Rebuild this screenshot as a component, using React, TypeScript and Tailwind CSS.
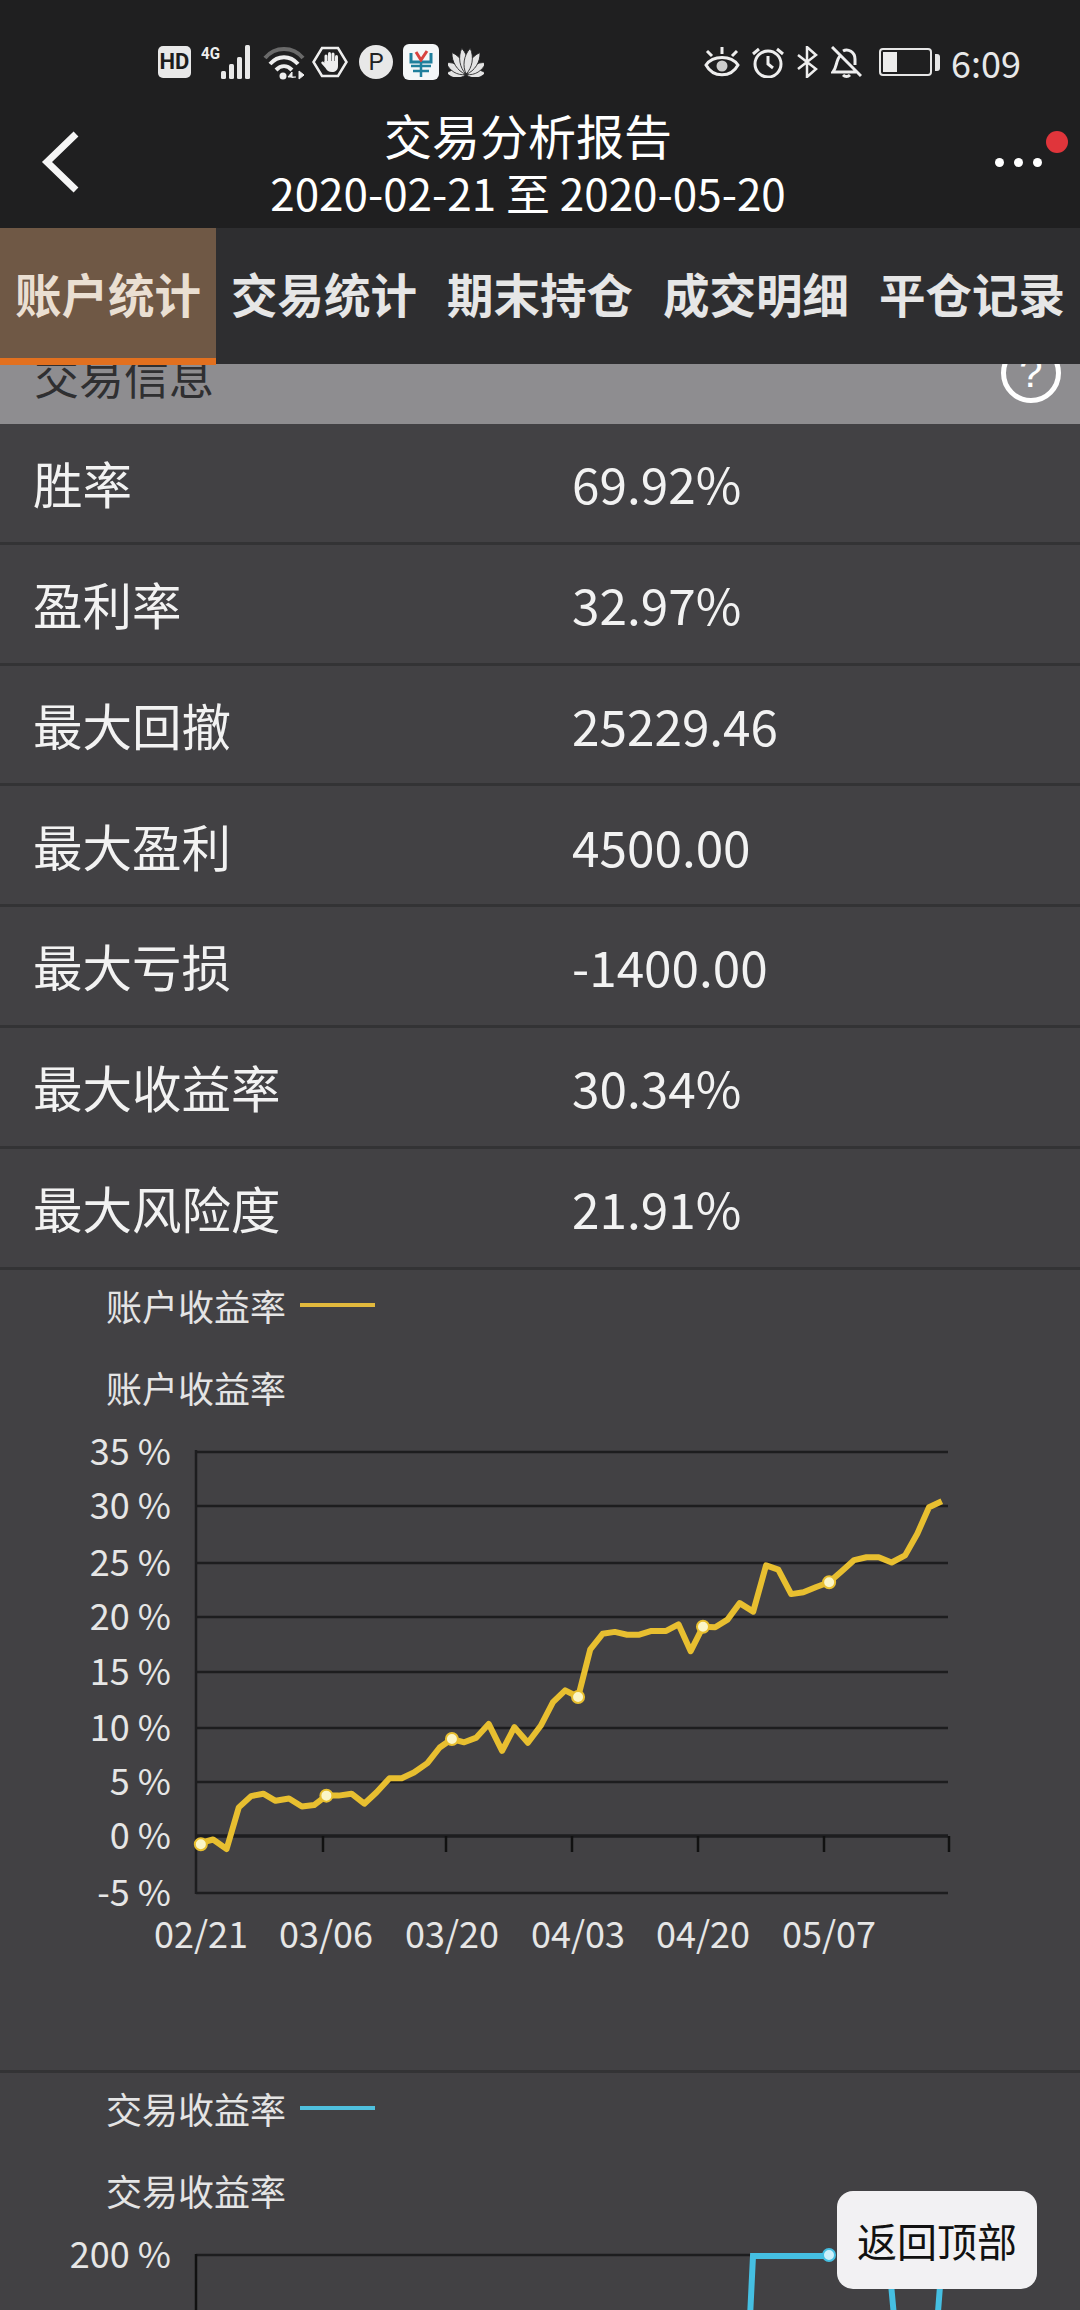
import React from "react";

const cjk = "font-['Noto_Sans_CJK_SC','Noto_Sans',sans-serif]";

const rows = [
  ["胜率", "69.92%"],
  ["盈利率", "32.97%"],
  ["最大回撤", "25229.46"],
  ["最大盈利", "4500.00"],
  ["最大亏损", "-1400.00"],
  ["最大收益率", "30.34%"],
  ["最大风险度", "21.91%"],
];

const tabs = ["账户统计", "交易统计", "期末持仓", "成交明细", "平仓记录"];

// traced from the reference, page x / y offset by the chart's top-left
const raw = [
  [222, 1238], [250, 1228], [272, 1248], [292, 1160], [312, 1136], [332, 1131], [352, 1146], [374, 1141], [395, 1158], [415, 1155],
  [435, 1135], [455, 1135], [476, 1131], [497, 1152], [517, 1128], [538, 1098], [558, 1098], [578, 1086], [600, 1066], [620, 1033],
  [640, 1015], [660, 1022], [680, 1012], [700, 983], [722, 1040], [742, 990], [764, 1023], [785, 987], [805, 937], [825, 912],
  [846, 926], [866, 825], [886, 792], [906, 788], [926, 794], [946, 794], [966, 786], [990, 786], [1010, 772], [1030, 829],
  [1050, 777], [1070, 778], [1090, 762], [1110, 727], [1132, 745], [1153, 647], [1173, 656], [1194, 708], [1214, 704], [1235, 693],
  [1256, 683], [1276, 660], [1297, 636], [1317, 630], [1337, 630], [1358, 641], [1380, 626], [1400, 580], [1419, 524], [1440, 511],
];
const rawDots = [[230, 1238], [435, 1135], [640, 1015], [846, 926], [1050, 777], [1256, 683]];
const px = (x: number) => x / 1.633 + 60;
const py = (y: number) => y / 2.119 - 160; // chart svg starts at page y 1420
const linePts = raw.map(([x, y]) => `${px(x).toFixed(1)},${py(y).toFixed(1)}`).join(" ");

const yTicks = [
  ["35 %", 32], ["30 %", 86], ["25 %", 143], ["20 %", 197], ["15 %", 252],
  ["10 %", 308], ["5 %", 362], ["0 %", 416], ["-5 %", 473],
] as const;
const xLabels = [["02/21", 201], ["03/06", 326], ["03/20", 452], ["04/03", 578], ["04/20", 703], ["05/07", 829]] as const;

const YieldChart = () => (
  <svg width="1080" height="540" className="block">
    {yTicks.map(([label, y]) => (
      <g key={label}>
        <line x1="196" x2="948" y1={y} y2={y} stroke="#1d1d1f" strokeWidth={label === "0 %" ? 3.5 : 2.5} />
        <text x="171" y={y + 13} textAnchor="end" fontSize="36" fill="#e6e6e6">{label}</text>
      </g>
    ))}
    <line x1="196" x2="196" y1="30" y2="474" stroke="#1d1d1f" strokeWidth="2.5" />
    {[323, 446, 572, 698, 824, 949].map((x) => (
      <line key={x} x1={x} x2={x} y1="416" y2="432" stroke="#111" strokeWidth="2.5" />
    ))}
    {xLabels.map(([label, x]) => (
      <text key={label} x={x} y="528" textAnchor="middle" fontSize="36" fill="#e6e6e6">{label}</text>
    ))}
    <polyline points={linePts} fill="none" stroke="#e8bf30" strokeWidth="6" strokeLinejoin="round" />
    {rawDots.map(([x, y]) => (
      <circle key={x} cx={px(x)} cy={py(y)} r="6" fill="#fbf6c8" stroke="#e8bf30" strokeWidth="2" />
    ))}
  </svg>
);

const petals = [
  { a: -84, l: 0.72 },
  { a: 84, l: 0.72 },
  { a: -58, l: 0.86 },
  { a: 58, l: 0.86 },
  { a: -32, l: 0.98 },
  { a: 32, l: 0.98 },
  { a: -9, l: 1 },
  { a: 9, l: 1 },
];

const StatusLeft = () => (
  <div className="flex items-center">
    {/* HD */}
    <div className="w-[33px] h-[32px] rounded-[5px] bg-[#e8e8e8] text-[#1c1c1c] flex items-center justify-center text-[22px] font-bold font-['Roboto',sans-serif] leading-none">HD</div>
    {/* 4G + signal */}
    <svg width="56" height="36" viewBox="0 0 56 36" className="ml-[10px]">
      <text x="0" y="15" fontSize="17" fontWeight="700" fill="#eee" fontFamily="Roboto, sans-serif" textLength="19" lengthAdjust="spacingAndGlyphs">4G</text>
      <g fill="#e8e8e8">
        <rect x="20" y="27" width="5" height="8" rx="1.5" />
        <rect x="28" y="20" width="5" height="15" rx="1.5" />
        <rect x="36" y="13" width="5" height="22" rx="1.5" />
        <rect x="44" y="1" width="5" height="34" rx="1.5" />
      </g>
    </svg>
    {/* wifi */}
    <svg width="44" height="36" viewBox="0 0 44 36" fill="none" className="ml-[6px]">
      <path d="M2 14C12 2 30 2 40 14" stroke="#6a6a6a" strokeWidth="4" />
      <path d="M7 20C15 11 27 11 35 20" stroke="#eee" strokeWidth="4" />
      <path d="M13 26C18 21 24 21 29 26" stroke="#eee" strokeWidth="4" />
      <circle cx="20" cy="32" r="3.5" fill="#eee" />
      <path d="M29 34V28L25 33H33M36 27V35L41 31Z" fill="#eee" stroke="#eee" strokeWidth="1" />
    </svg>
    {/* stop hand */}
    <svg width="36" height="32" viewBox="0 0 36 32" fill="none" className="ml-[5px]">
      <path d="M10 2H26L34.5 16L26 30H10L1.5 16Z" stroke="#eee" strokeWidth="2.5" />
      <g fill="#eee">
        <rect x="12.5" y="8.5" width="3" height="11" rx="1.5" />
        <rect x="16" y="6" width="3" height="13" rx="1.5" />
        <rect x="19.5" y="6.5" width="3" height="13" rx="1.5" />
        <rect x="23" y="9" width="3" height="11" rx="1.5" />
        <path d="M12.5 15H26V20C26 24 23.5 26 20 26C16.5 26 15 24.5 13.5 22L9.5 17.5C8.6 16.2 10.2 14.8 11.4 15.8L12.5 17Z" />
      </g>
    </svg>
    {/* P */}
    <div className="ml-[11px] w-[34px] h-[34px] rounded-full bg-[#e8e8e8] text-[#222] flex items-center justify-center text-[24px] font-['Roboto',sans-serif] leading-none">P</div>
    {/* app */}
    <svg width="36" height="36" viewBox="0 0 36 36" className="ml-[10px]">
      <rect width="36" height="36" rx="6" fill="#f4f7f8" />
      <path d="M8 9V18H28V9" fill="none" stroke="#1f7f9c" strokeWidth="3" />
      <path d="M13 8L18 16L24 7" fill="none" stroke="#d8433f" strokeWidth="3" />
      <path d="M8 22H28M18 18V33M10 27H26" fill="none" stroke="#1f7f9c" strokeWidth="2.5" />
    </svg>
    {/* petal logo */}
    <svg width="36" height="30" viewBox="0 0 36 30" fill="#e4e4e4" className="ml-[9px]">
      {petals.map((p) => (
        <path
          key={p.a}
          transform={`translate(18 28) rotate(${p.a}) scale(1 ${p.l})`}
          d="M0 -1C-5 -8 -5.5 -19 0 -27C5.5 -19 5 -8 0 -1Z"
          stroke="#1f1f20"
          strokeWidth="0.8"
        />
      ))}
    </svg>
  </div>
);

const StatusRight = () => (
  <div className="flex items-center">
    {/* eye comfort */}
    <svg width="38" height="32" viewBox="0 0 38 32" fill="none" stroke="#eee" strokeWidth="3">
      <path d="M3 19C10 9 28 9 35 19C28 32 10 32 3 19Z" />
      <circle cx="19" cy="20" r="5.5" fill="#ccc" stroke="none" />
      <path d="M19 8V1M9 10L4 5M29 10L34 5" />
    </svg>
    {/* alarm */}
    <svg width="34" height="32" viewBox="0 0 34 32" fill="none" stroke="#eee" strokeWidth="3" className="ml-[10px]">
      <circle cx="17" cy="18" r="13" />
      <path d="M17 10V18L22 22M2 8L8 3M32 8L26 3" />
    </svg>
    {/* bluetooth */}
    <svg width="22" height="32" viewBox="0 0 22 32" fill="none" stroke="#eee" strokeWidth="2.5" className="ml-[11px]">
      <path d="M2 9L20 23L11 31V1L20 9L2 23" />
    </svg>
    {/* muted bell */}
    <svg width="31" height="32" viewBox="0 0 31 32" fill="none" stroke="#eee" strokeWidth="3" className="ml-[13px]">
      <path d="M1 1L30 30M9 10C5 14 6 21 2 26H25M12 5C17 2 24 6 24 13V19M12 29C14 31 17 31 19 29" />
    </svg>
    {/* battery */}
    <div className="ml-[17px] w-[53px] h-[28px] rounded-[4px] border-2 border-[#e6e6e6] p-[2px]">
      <div className="w-[14px] h-full bg-[#ececec]" />
    </div>
    <div className="ml-[3px] w-[5px] h-[17px] rounded-r-[3px] bg-[#e6e6e6]" />
    <span className="ml-[11px] text-[36px] leading-none text-[#e8e8e8]">6:09</span>
  </div>
);

const LegendBlock = ({ name, color }: { name: string; color: string }) => (
  <>
    <div className="pl-[106px] h-[40px] flex items-center text-[36px] leading-none text-[#e4e4e4]">
      {name}
      <div className="ml-[14px] w-[75px] h-[4px]" style={{ background: color }} />
    </div>
    <div className="pl-[106px] mt-[42px] h-[40px] flex items-center text-[36px] leading-none text-[#e4e4e4]">{name}</div>
  </>
);

export default function App() {
  return (
    <div className={`${cjk} relative w-[1080px] h-[2310px] overflow-hidden bg-[#424144]`}>
      {/* status bar + title */}
      <div className="h-[228px] bg-[#1f1f20] text-white">
        <div className="h-[104px] pt-[44px] pl-[158px] pr-[59px] flex items-start justify-between">
          <StatusLeft />
          <StatusRight />
        </div>
        <div className="flex items-start">
          <div className="w-[120px] pl-[41px] pt-[27px]">
            <svg width="38" height="62" viewBox="0 0 38 62" fill="none" stroke="#f5f5f5" strokeWidth="7">
              <path d="M35 3L6 31L35 59" />
            </svg>
          </div>
          <div className="flex-1 text-center pr-[24px]">
            <div className="text-[48px] leading-[58px] mt-[1px]">交易分析报告</div>
            <div className="text-[44px] leading-[58px]">2020-02-21 至 2020-05-20</div>
          </div>
          <div className="relative w-[120px] pt-[54px] pl-[35px]">
            <div className="flex gap-[10px]">
              <div className="w-[9px] h-[9px] rounded-full bg-white" />
              <div className="w-[9px] h-[9px] rounded-full bg-white" />
              <div className="w-[9px] h-[9px] rounded-full bg-white" />
            </div>
            <div className="absolute left-[86px] top-[27px] w-[22px] h-[22px] rounded-full bg-[#e0353b]" />
          </div>
        </div>
      </div>

      {/* tabs */}
      <div className="relative z-10 flex h-[136px] bg-[#2e2e30]">
        {tabs.map((t, i) => (
          <div
            key={t}
            className={`w-[216px] h-[137px] flex items-center justify-center border-b-[7px] text-[46.5px] font-bold leading-none ${i === 0 ? "bg-[#6f5845] border-[#e2701f] text-[#eadfd2]" : "border-transparent text-[#e6e6e6]"}`}
          >
            {t}
          </div>
        ))}
      </div>

      {/* section header, scrolled partly under the tabs */}
      <div className="h-[60px] bg-[#8e8d90] overflow-hidden flex items-end justify-between pl-[34px] pr-[19px] pb-[21px]">
        <span className="text-[45px] leading-[56px] text-[#2f2f31] shrink-0 mb-[-1px]">交易信息</span>
        <div className="w-[60px] h-[60px] shrink-0 rounded-full border-[5px] border-white flex items-center justify-center text-[42px] leading-none text-white font-['Liberation_Sans',sans-serif]">?</div>
      </div>

      {/* stats */}
      {rows.map(([label, value]) => (
        <div key={label} className="h-[120.8px] flex items-center border-b-[3px] border-[#333335] pl-[33px] text-[49.5px] leading-none text-[#f2f2f2]">
          <div className="w-[539px]">{label}</div>
          <div>{value}</div>
        </div>
      ))}

      {/* account yield chart */}
      <div className="h-[803px] pt-[15px] border-b-[3px] border-[#333335]">
        <LegendBlock name="账户收益率" color="#e2b93d" />
        <div className="mt-[13px]">
          <YieldChart />
        </div>
      </div>

      {/* trade yield chart */}
      <div className="pt-[15px]">
        <LegendBlock name="交易收益率" color="#4fc0de" />
        <div className="relative h-[125px] mt-[3px]">
          <svg width="1080" height="125" className="block">
            <text x="171" y="55" textAnchor="end" fontSize="36" fill="#e6e6e6">200 %</text>
            <line x1="196" x2="760" y1="42" y2="42" stroke="#1d1d1f" strokeWidth="2.5" />
            <line x1="196" x2="196" y1="41" y2="125" stroke="#111" strokeWidth="2.5" />
            <path d="M749 125L753 43H830" fill="none" stroke="#45bfe2" strokeWidth="6" />
            <path d="M890 60L896 125M941 60L936 125" fill="none" stroke="#45bfe2" strokeWidth="6" />
            <circle cx="829" cy="42" r="6" fill="#cdf1fb" stroke="#45bfe2" strokeWidth="2" />
          </svg>
        </div>
      </div>

      {/* floating back-to-top */}
      <div className="absolute left-[837px] top-[2191px] w-[200px] h-[98px] rounded-[16px] bg-[#f2f1f3] flex items-center justify-center text-[40px] leading-none text-[#111]">
        返回顶部
      </div>
    </div>
  );
}
